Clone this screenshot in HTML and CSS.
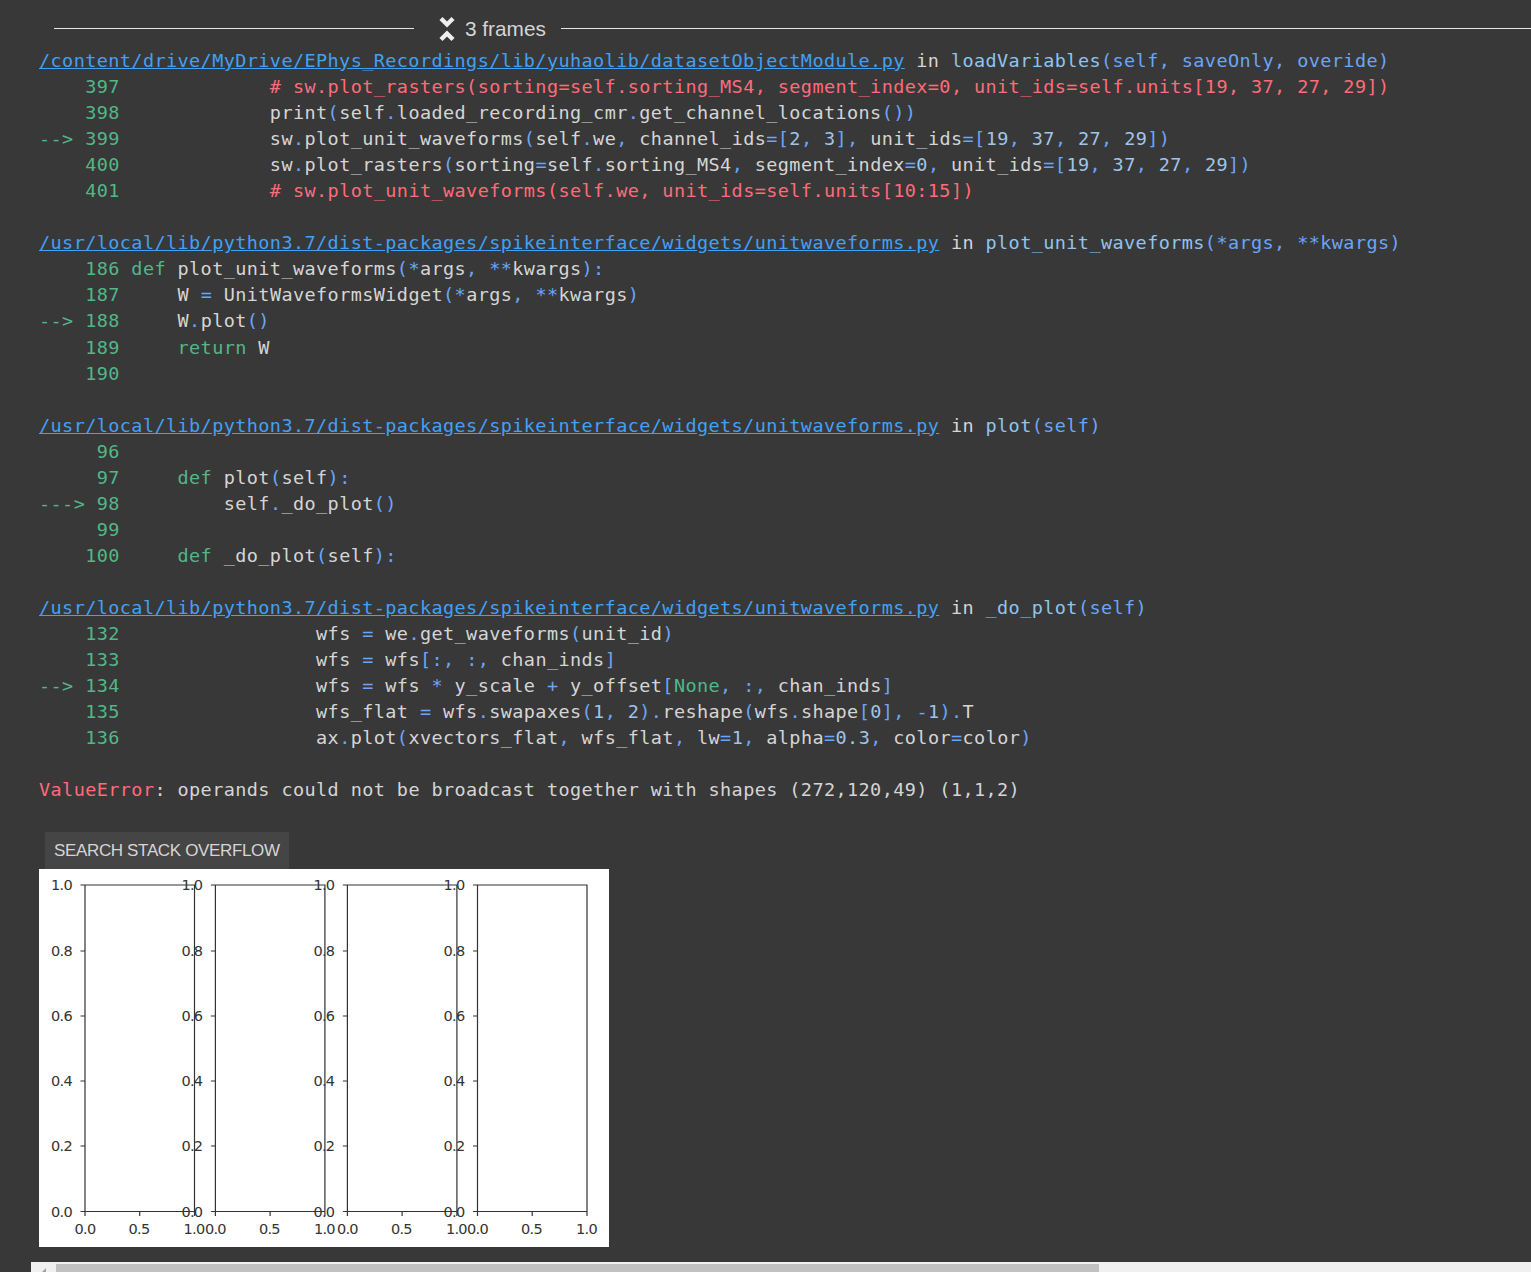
FILE: index.html
```html
<!DOCTYPE html>
<html lang="en">
<head>
	<meta charset="UTF-8">
	<title>Traceback output</title>
	<link rel="stylesheet" href="styles.css">
</head>
<body>
<div class="page">
	<div class="frames">
		<div class="frames-line frames-line-left"></div>
		<svg class="frames-icon" width="18" height="26" viewBox="0 0 18 26">
			<path d="M3 2.5 L9 8.5 L15 2.5 M3 23.5 L9 17.5 L15 23.5" fill="none" stroke="#eeeeee" stroke-width="4.4"/>
		</svg>
		<span class="frames-label">3 frames</span>
		<div class="frames-line frames-line-right"></div>
	</div>

<pre class="trace"><a class="path">/content/drive/MyDrive/EPhys_Recordings/lib/yuhaolib/datasetObjectModule.py</a> in <span class="f">loadVariables</span><span class="h">(self, saveOnly, overide)</span>
<span class="g">    397</span> <span class="c">            # sw.plot_rasters(sorting=self.sorting_MS4, segment_index=0, unit_ids=self.units[19, 37, 27, 29])</span>
<span class="g">    398</span>             print<span class="p">(</span>self<span class="p">.</span>loaded_recording_cmr<span class="p">.</span>get_channel_locations<span class="p">())</span>
<span class="g">--&gt; 399</span>             sw<span class="p">.</span>plot_unit_waveforms<span class="p">(</span>self<span class="p">.</span>we<span class="p">,</span> channel_ids<span class="p">=[</span><span class="m">2</span><span class="p">,</span> <span class="m">3</span><span class="p">],</span> unit_ids<span class="p">=[</span><span class="m">19</span><span class="p">,</span> <span class="m">37</span><span class="p">,</span> <span class="m">27</span><span class="p">,</span> <span class="m">29</span><span class="p">])</span>
<span class="g">    400</span>             sw<span class="p">.</span>plot_rasters<span class="p">(</span>sorting<span class="p">=</span>self<span class="p">.</span>sorting_MS4<span class="p">,</span> segment_index<span class="p">=</span><span class="m">0</span><span class="p">,</span> unit_ids<span class="p">=[</span><span class="m">19</span><span class="p">,</span> <span class="m">37</span><span class="p">,</span> <span class="m">27</span><span class="p">,</span> <span class="m">29</span><span class="p">])</span>
<span class="g">    401</span> <span class="c">            # sw.plot_unit_waveforms(self.we, unit_ids=self.units[10:15])</span>

<a class="path">/usr/local/lib/python3.7/dist-packages/spikeinterface/widgets/unitwaveforms.py</a> in <span class="f">plot_unit_waveforms</span><span class="h">(*args, **kwargs)</span>
<span class="g">    186 def</span> plot_unit_waveforms<span class="p">(*</span>args<span class="p">,</span> <span class="p">**</span>kwargs<span class="p">):</span>
<span class="g">    187</span>     W <span class="p">=</span> UnitWaveformsWidget<span class="p">(*</span>args<span class="p">,</span> <span class="p">**</span>kwargs<span class="p">)</span>
<span class="g">--&gt; 188</span>     W<span class="p">.</span>plot<span class="p">()</span>
<span class="g">    189     return</span> W
<span class="g">    190</span>

<a class="path">/usr/local/lib/python3.7/dist-packages/spikeinterface/widgets/unitwaveforms.py</a> in <span class="f">plot</span><span class="h">(self)</span>
<span class="g">     96</span>
<span class="g">     97     def</span> plot<span class="p">(</span>self<span class="p">):</span>
<span class="g">---&gt; 98</span>         self<span class="p">.</span>_do_plot<span class="p">()</span>
<span class="g">     99</span>
<span class="g">    100     def</span> _do_plot<span class="p">(</span>self<span class="p">):</span>

<a class="path">/usr/local/lib/python3.7/dist-packages/spikeinterface/widgets/unitwaveforms.py</a> in <span class="f">_do_plot</span><span class="h">(self)</span>
<span class="g">    132</span>                 wfs <span class="p">=</span> we<span class="p">.</span>get_waveforms<span class="p">(</span>unit_id<span class="p">)</span>
<span class="g">    133</span>                 wfs <span class="p">=</span> wfs<span class="p">[:,</span> <span class="p">:,</span> chan_inds<span class="p">]</span>
<span class="g">--&gt; 134</span>                 wfs <span class="p">=</span> wfs <span class="p">*</span> y_scale <span class="p">+</span> y_offset<span class="p">[</span><span class="g">None</span><span class="p">,</span> <span class="p">:,</span> chan_inds<span class="p">]</span>
<span class="g">    135</span>                 wfs_flat <span class="p">=</span> wfs<span class="p">.</span>swapaxes<span class="p">(</span><span class="m">1</span><span class="p">,</span> <span class="m">2</span><span class="p">).</span>reshape<span class="p">(</span>wfs<span class="p">.</span>shape<span class="p">[</span><span class="m">0</span><span class="p">],</span> <span class="p">-</span><span class="m">1</span><span class="p">).</span>T
<span class="g">    136</span>                 ax<span class="p">.</span>plot<span class="p">(</span>xvectors_flat<span class="p">,</span> wfs_flat<span class="p">,</span> lw<span class="p">=</span><span class="m">1</span><span class="p">,</span> alpha<span class="p">=</span><span class="m">0.3</span><span class="p">,</span> color<span class="p">=</span>color<span class="p">)</span>

<span class="c">ValueError</span>: operands could not be broadcast together with shapes (272,120,49) (1,1,2)</pre>

	<div class="so-row"><span class="so-button">SEARCH STACK OVERFLOW</span></div>

	<svg class="plot" width="570" height="378" viewBox="0 0 570 378">
		<g class="ax">
			<path d="M46 16H155.5V342.5H46Z M41.5 16H46 M41.5 82H46 M41.5 147H46 M41.5 212H46 M41.5 277H46 M41.5 342.5H46 M46 343V347 M100.7 343V347 M155.5 343V347"/>
			<text x="33" y="21" text-anchor="end">1.0</text>
			<text x="33" y="87" text-anchor="end">0.8</text>
			<text x="33" y="152" text-anchor="end">0.6</text>
			<text x="33" y="217" text-anchor="end">0.4</text>
			<text x="33" y="282" text-anchor="end">0.2</text>
			<text x="33" y="348" text-anchor="end">0.0</text>
			<text x="46" y="365" text-anchor="middle">0.0</text>
			<text x="100" y="365" text-anchor="middle">0.5</text>
			<text x="155" y="365" text-anchor="middle">1.0</text>
		</g>
		<g class="ax" transform="translate(130.4 0)">
			<path d="M46 16H155.5V342.5H46Z M41.5 16H46 M41.5 82H46 M41.5 147H46 M41.5 212H46 M41.5 277H46 M41.5 342.5H46 M46 343V347 M100.7 343V347 M155.5 343V347"/>
			<text x="33" y="21" text-anchor="end">1.0</text>
			<text x="33" y="87" text-anchor="end">0.8</text>
			<text x="33" y="152" text-anchor="end">0.6</text>
			<text x="33" y="217" text-anchor="end">0.4</text>
			<text x="33" y="282" text-anchor="end">0.2</text>
			<text x="33" y="348" text-anchor="end">0.0</text>
			<text x="46" y="365" text-anchor="middle">0.0</text>
			<text x="100" y="365" text-anchor="middle">0.5</text>
			<text x="155" y="365" text-anchor="middle">1.0</text>
		</g>
		<g class="ax" transform="translate(262.4 0)">
			<path d="M46 16H155.5V342.5H46Z M41.5 16H46 M41.5 82H46 M41.5 147H46 M41.5 212H46 M41.5 277H46 M41.5 342.5H46 M46 343V347 M100.7 343V347 M155.5 343V347"/>
			<text x="33" y="21" text-anchor="end">1.0</text>
			<text x="33" y="87" text-anchor="end">0.8</text>
			<text x="33" y="152" text-anchor="end">0.6</text>
			<text x="33" y="217" text-anchor="end">0.4</text>
			<text x="33" y="282" text-anchor="end">0.2</text>
			<text x="33" y="348" text-anchor="end">0.0</text>
			<text x="46" y="365" text-anchor="middle">0.0</text>
			<text x="100" y="365" text-anchor="middle">0.5</text>
			<text x="155" y="365" text-anchor="middle">1.0</text>
		</g>
		<g class="ax" transform="translate(392.5 0)">
			<path d="M46 16H155.5V342.5H46Z M41.5 16H46 M41.5 82H46 M41.5 147H46 M41.5 212H46 M41.5 277H46 M41.5 342.5H46 M46 343V347 M100.7 343V347 M155.5 343V347"/>
			<text x="33" y="21" text-anchor="end">1.0</text>
			<text x="33" y="87" text-anchor="end">0.8</text>
			<text x="33" y="152" text-anchor="end">0.6</text>
			<text x="33" y="217" text-anchor="end">0.4</text>
			<text x="33" y="282" text-anchor="end">0.2</text>
			<text x="33" y="348" text-anchor="end">0.0</text>
			<text x="46" y="365" text-anchor="middle">0.0</text>
			<text x="100" y="365" text-anchor="middle">0.5</text>
			<text x="155" y="365" text-anchor="middle">1.0</text>
		</g>
	</svg>

	<div class="hscroll">
		<div class="hscroll-arrow"></div>
		<div class="hscroll-thumb"></div>
	</div>
</div>
</body>
</html>
```

FILE: styles.css
```css
* {
	margin: 0;
	padding: 0;
	box-sizing: border-box;
}

html, body {
	height: 100%;
	overflow: hidden;
}

body {
	background: #383838;
}

.page {
	height: 1272px;
	display: flex;
	flex-direction: column;
	padding-top: 16px;
}

.frames {
	height: 32px;
	padding-left: 54px;
	display: flex;
	align-items: flex-start;
}

.frames-line {
	height: 1px;
	margin-top: 12px;
	background: #e6e6e6;
}

.frames-line-left {
	width: 360px;
}

.frames-line-right {
	flex: 1;
}

.frames-icon {
	margin-left: 24px;
	display: block;
}

.frames-label {
	margin: 0 15px 0 9px;
	font-family: "Liberation Sans", sans-serif;
	font-size: 20.8px;
	line-height: 26px;
	color: #d5d5d5;
}

.trace {
	margin-left: 39px;
	font-family: "DejaVu Sans Mono", monospace;
	font-size: 18.5px;
	letter-spacing: 0.405px;
	line-height: 26.04px;
	color: #d5d5d5;
}

.path {
	color: #42a0f5;
	text-decoration: underline;
}

.f {
	color: #90c4ec;
}

.h, .p {
	color: #6aa5f8;
}

.m {
	color: #9fc5ea;
}

.g {
	color: #52b788;
}

.c {
	color: #ff6b78;
}

.so-row {
	margin: 29px 0 0 45px;
	display: flex;
}

.so-button {
	height: 37px;
	padding: 0 9px;
	background: #454545;
	font-family: "Liberation Sans", sans-serif;
	font-size: 17px;
	letter-spacing: -0.35px;
	line-height: 37px;
	color: #d5d5d5;
}

.plot {
	display: block;
	margin-left: 39px;
	background: #ffffff;
	flex: none;
}

.ax path {
	fill: none;
	stroke: #333333;
	stroke-width: 1.2;
}

.ax text {
	font-family: "DejaVu Sans", sans-serif;
	font-size: 14.5px;
	letter-spacing: -0.7px;
	fill: #333333;
}

.hscroll {
	margin: auto 0 0 31px;
	height: 10px;
	padding: 2px 0 0 25px;
	background: #f0f0f0;
	position: relative;
}

.hscroll-thumb {
	width: 1043px;
	height: 8px;
	background: #c1c1c1;
}

.hscroll-arrow {
	position: absolute;
	left: 11px;
	top: 6px;
	border-style: solid;
	border-width: 4px 4px 4px 0;
	border-color: transparent #a0a0a0 transparent transparent;
}
```
